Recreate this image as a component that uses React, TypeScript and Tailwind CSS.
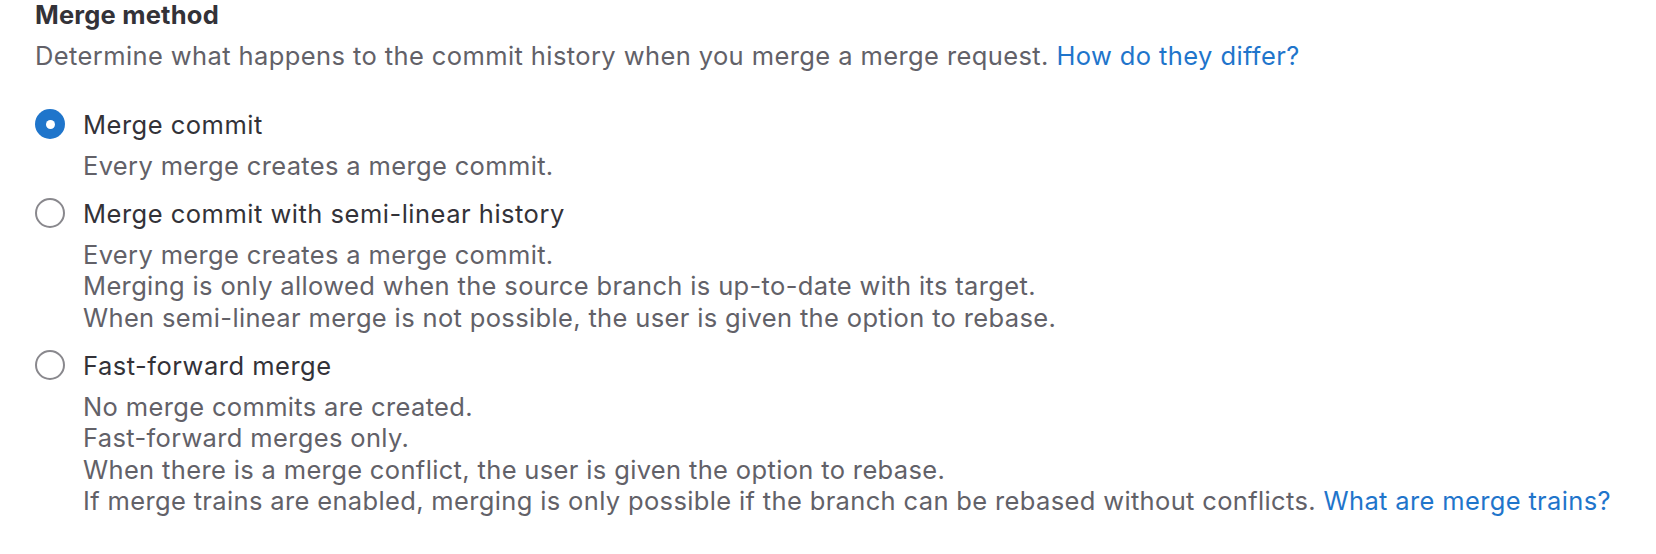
import React from 'react';

type Option = {
  id: string;
  label: string;
  help: React.ReactNode[];
};

const options: Option[] = [
  {
    id: 'merge',
    label: 'Merge commit',
    help: ['Every merge creates a merge commit.'],
  },
  {
    id: 'rebase_merge',
    label: 'Merge commit with semi-linear history',
    help: [
      'Every merge creates a merge commit.',
      'Merging is only allowed when the source branch is up-to-date with its target.',
      'When semi-linear merge is not possible, the user is given the option to rebase.',
    ],
  },
  {
    id: 'ff',
    label: 'Fast-forward merge',
    help: [
      'No merge commits are created.',
      'Fast-forward merges only.',
      'When there is a merge conflict, the user is given the option to rebase.',
      <>
        If merge trains are enabled, merging is only possible if the branch can be rebased without conflicts.{' '}
        <a href="#" className="text-[#1f75cb]">What are merge trains?</a>
      </>,
    ],
  },
];

const Radio = ({ checked }: { checked: boolean }) =>
  checked ? (
    <span className="flex h-[30px] w-[30px] shrink-0 items-center justify-center rounded-full bg-[#1f75cb]">
      <span className="h-[9px] w-[9px] rounded-full bg-white" />
    </span>
  ) : (
    <span className="h-[30px] w-[30px] shrink-0 rounded-full border-2 border-[#89888d] bg-white" />
  );

export default function App() {
  const selected = 'merge';

  return (
    <div className="min-h-[554px] w-[1656px] bg-white pl-[35px] font-[Inter,'Noto_Sans',sans-serif] text-[25.5px] leading-[31.5px] tracking-[0.35px] text-[#333238]">
      <h2 className="font-bold leading-[30px] tracking-[0.2px]">Merge method</h2>
      <p className="mt-[10px] tracking-[0.4px] text-[#626168]">
        Determine what happens to the commit history when you merge a merge request.{' '}
        <a href="#" className="text-[#1f75cb]">How do they differ?</a>
      </p>

      <div className="mt-[37px] flex flex-col gap-[16.5px]">
        {options.map((opt) => (
          <div key={opt.id} className="flex flex-col">
            <label className="flex items-center gap-[18px]">
              <Radio checked={opt.id === selected} />
              <span className="tracking-[0.5px]">{opt.label}</span>
            </label>
            <div className="mt-[9.5px] pl-[48px] text-[#626168]">
              {opt.help.map((line, i) => (
                <div key={i}>{line}</div>
              ))}
            </div>
          </div>
        ))}
      </div>
    </div>
  );
}
